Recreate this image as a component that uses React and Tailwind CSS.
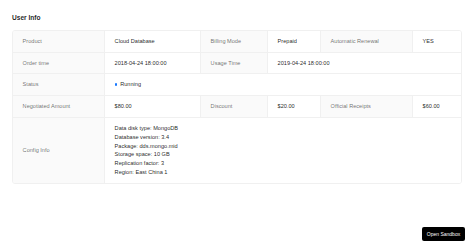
export default function App() {
  const L = "bg-[#fafafa] text-[rgba(0,0,0,0.58)] border-r border-[#f0f0f0] px-[9.6px] flex items-center";
  const C = "bg-white text-[rgba(0,0,0,0.88)] border-r border-[#f0f0f0] px-[9.6px] flex items-center";
  const rowB = "border-b border-[#f0f0f0]";
  return (
    <div className="relative w-[474px] h-[248px] bg-white overflow-hidden" style={{ fontFamily: '"Liberation Sans", Arial, sans-serif' }}>
      <div className="pt-[12.6px] pl-[12px]">
        <div className="text-[6.6px] leading-[9.6px] font-bold text-[rgba(0,0,0,0.88)] mb-[8px]">User Info</div>
        <div className="w-[450px] border border-[#f0f0f0] rounded-[3px] overflow-hidden text-[5.6px] leading-[8.8px]">
          <div className={`grid grid-cols-[92px_96px_67px_53px_92px_50px] h-[21.6px] ${rowB}`}>
            <div className={L}>Product</div>
            <div className={C}>Cloud Database</div>
            <div className={L}>Billing Mode</div>
            <div className={C}>Prepaid</div>
            <div className={L}>Automatic Renewal</div>
            <div className={`${C} border-r-0`}>YES</div>
          </div>
          <div className={`grid grid-cols-[92px_96px_67px_195px] h-[21.6px] ${rowB}`}>
            <div className={L}>Order time</div>
            <div className={C}>2018-04-24 18:00:00</div>
            <div className={L}>Usage Time</div>
            <div className={`${C} border-r-0`}>2019-04-24 18:00:00</div>
          </div>
          <div className={`grid grid-cols-[92px_358px] h-[21.6px] ${rowB}`}>
            <div className={L}>Status</div>
            <div className={`${C} border-r-0`}>
              <span className="inline-block w-[2.4px] h-[2.4px] rounded-full bg-[#1677ff] mr-[3.2px]"></span>
              Running
            </div>
          </div>
          <div className={`grid grid-cols-[92px_96px_67px_53px_92px_50px] h-[21.6px] ${rowB}`}>
            <div className={L}>Negotiated Amount</div>
            <div className={C}>$80.00</div>
            <div className={L}>Discount</div>
            <div className={C}>$20.00</div>
            <div className={L}>Official Receipts</div>
            <div className={`${C} border-r-0`}>$60.00</div>
          </div>
          <div className="grid grid-cols-[92px_358px]">
            <div className={L}>Config Info</div>
            <div className="bg-white text-[rgba(0,0,0,0.88)] px-[9.6px] py-[6.4px]">
              <div>Data disk type: MongoDB</div>
              <div>Database version: 3.4</div>
              <div>Package: dds.mongo.mid</div>
              <div>Storage space: 10 GB</div>
              <div>Replication factor: 3</div>
              <div>Region: East China 1</div>
            </div>
          </div>
        </div>
      </div>
      <div className="absolute right-[9px] bottom-[7px] w-[43px] h-[14px] bg-black rounded-[2px] flex items-center justify-center text-white text-[5px] leading-none">
        Open Sandbox
      </div>
    </div>
  );
}
